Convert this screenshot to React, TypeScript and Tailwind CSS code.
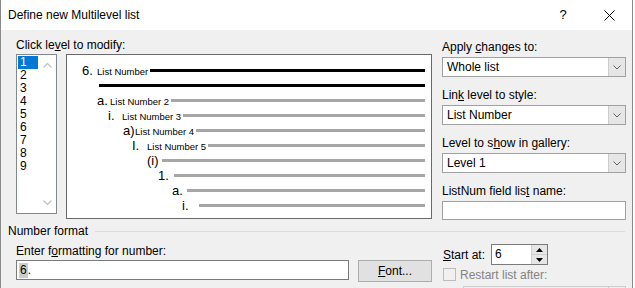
import React from "react";

const Chevron = ({ color = "#606060" }: { color?: string }) => (
  <svg width="8" height="5" viewBox="0 0 8 5">
    <path d="M0.5 0.5 L4 4 L7.5 0.5" fill="none" stroke={color} strokeWidth="1" />
  </svg>
);

const ChevronUp = ({ color = "#c0c0c0" }: { color?: string }) => (
  <svg width="9" height="5" viewBox="0 0 9 5">
    <path d="M0.5 4.5 L4.5 0.5 L8.5 4.5" fill="none" stroke={color} strokeWidth="1.2" />
  </svg>
);

function Combo({ value }: { value: string }) {
  return (
    <div className="flex h-[20px] border border-[#a0a0a0] bg-white">
      <div className="flex-1 pl-[4px] leading-[18px]">{value}</div>
      <div className="w-[17px] bg-[#e6e6e6] border-l border-[#cccccc] flex items-center justify-center">
        <Chevron />
      </div>
    </div>
  );
}

type Row = { pl: number; num?: string; nw?: number; text?: string; black?: boolean };

const rows: Row[] = [
  { pl: 15, num: "6.", nw: 15, text: "List Number", black: true },
  { pl: 30, black: true },
  { pl: 30, num: "a.", nw: 13, text: "List Number 2" },
  { pl: 41, num: "i.", nw: 14, text: "List Number 3" },
  { pl: 56, num: "a)", nw: 12, text: "List Number 4" },
  { pl: 65, num: "I.", nw: 15, text: "List Number 5" },
  { pl: 80, num: "(i)", nw: 13 },
  { pl: 91, num: "1.", nw: 14 },
  { pl: 105, num: "a.", nw: 13 },
  { pl: 115, num: "i.", nw: 15 },
];

export default function App() {
  return (
    <div className="w-[635px] h-[288px] overflow-hidden bg-white font-['Liberation_Sans',Arial,sans-serif] text-[12px] text-black">
      <div className="w-[633px] h-[288px] border-x border-[#8a8a8a] flex flex-col">
        {/* Title bar */}
        <div className="h-[30px] bg-white flex items-center shrink-0">
          <div className="pl-[7px]">Define new Multilevel list</div>
          <div className="ml-auto flex">
            <div className="w-[46px] h-[30px] flex items-center justify-center text-[13px]">?</div>
            <div className="w-[46px] h-[30px] flex items-center justify-center">
              <svg width="11" height="11" viewBox="0 0 11 11">
                <path d="M0.5 0.5 L10.5 10.5 M10.5 0.5 L0.5 10.5" stroke="#000" strokeWidth="1" />
              </svg>
            </div>
          </div>
        </div>

        {/* Body */}
        <div className="flex-1 bg-[#f0f0f0] flex flex-col">
          <div className="flex pl-[15px]">
            {/* Left part */}
            <div className="w-[416px] pt-[7px]">
              <div className="h-[16px] leading-[16px]">
                Click le<span className="underline">v</span>el to modify:
              </div>
              <div className="flex mt-[1px] items-start">
                <div className="w-[41px] h-[160px] border border-[#828790] bg-white flex">
                  <div className="w-[22px] pt-[1px] pl-[1px]">
                    {["1", "2", "3", "4", "5", "6", "7", "8", "9"].map((n, i) => (
                      <div
                        key={n}
                        className={`w-[20px] h-[13px] leading-[13px] pl-[2px] ${i === 0 ? "bg-[#0078d7] text-white" : ""}`}
                      >
                        {n}
                      </div>
                    ))}
                  </div>
                  <div className="flex-1 flex flex-col items-center justify-between py-[8px]">
                    <ChevronUp />
                    <div className="rotate-180 flex">
                      <ChevronUp />
                    </div>
                  </div>
                </div>
                <div className="ml-[9px] w-[366px] h-[165px] border border-[#6a6a6a] bg-white pt-[8px] pr-[6px]">
                  {rows.map((r, i) => (
                    <div key={i} className="h-[15px] flex items-center" style={{ paddingLeft: r.pl }}>
                      {r.num && (
                        <span className="text-[13px] leading-[15px] shrink-0" style={{ width: r.nw }}>
                          {r.num}
                        </span>
                      )}
                      {r.text && (
                        <span className="text-[9.5px] leading-[15px] shrink-0 pt-[1px]">{r.text}</span>
                      )}
                      <div className={`flex-1 h-[3px] ml-[2px] ${r.black ? "bg-black" : "bg-[#a6a6a6]"}`} />
                    </div>
                  ))}
                </div>
              </div>
            </div>

            {/* Right column */}
            <div className="ml-[10px] w-[184px] pt-[9px] flex flex-col">
              <div className="h-[16px] leading-[16px]">
                Apply <span className="underline">c</span>hanges to:
              </div>
              <div className="mt-[2px]">
                <Combo value="Whole list" />
              </div>
              <div className="h-[16px] leading-[16px] mt-[10px]">
                Lin<span className="underline">k</span> level to style:
              </div>
              <div className="mt-[2px]">
                <Combo value="List Number" />
              </div>
              <div className="h-[16px] leading-[16px] mt-[10px]">
                Level to s<span className="underline">h</span>ow in gallery:
              </div>
              <div className="mt-[2px]">
                <Combo value="Level 1" />
              </div>
              <div className="h-[16px] leading-[16px] mt-[10px]">
                ListNum field lis<span className="underline">t</span> name:
              </div>
              <div className="mt-[2px] h-[19px] border border-[#a0a0a0] bg-white" />
            </div>
          </div>

          {/* Number format */}
          <div className="flex items-center h-[16px] mt-[3px] pl-[7px] pr-[7px]">
            <span className="leading-[16px]">Number format</span>
            <div className="flex-1 h-px bg-[#dcdcdc] ml-[7px]" />
          </div>

          <div className="flex pl-[15px]">
            <div className="w-[416px] mt-[4px]">
              <div className="h-[16px] leading-[16px]">
                Enter f<span className="underline">o</span>rmatting for number:
              </div>
              <div className="flex mt-[1px] items-start">
                <div className="w-[333px] h-[20px] border border-[#7a7a7a] bg-white flex items-center pl-[2px]">
                  <span className="bg-[#cccccc] px-[1px] leading-[15px]">6</span>
                  <span>.</span>
                </div>
                <div className="ml-[9px] w-[74px] h-[22px] border border-[#adadad] bg-[#e1e1e1] flex items-center justify-center">
                  <span>
                    <span className="underline">F</span>ont...
                  </span>
                </div>
              </div>
            </div>

            <div className="ml-[11px] mt-[5px] flex flex-col">
              <div className="flex items-center h-[21px]">
                <span className="w-[48px]">
                  <span className="underline">S</span>tart at:
                </span>
                <div className="w-[57px] h-[21px] border border-[#7a7a7a] bg-white flex">
                  <div className="flex-1 pl-[3px] leading-[19px]">6</div>
                  <div className="w-[16px] flex flex-col border-l border-[#cfcfcf]">
                    <div className="flex-1 bg-[#e6e6e6] border-b border-[#cfcfcf] flex items-center justify-center">
                      <svg width="7" height="4" viewBox="0 0 7 4">
                        <path d="M0 4 L3.5 0 L7 4 Z" fill="#000" />
                      </svg>
                    </div>
                    <div className="flex-1 bg-[#e6e6e6] flex items-center justify-center">
                      <svg width="7" height="4" viewBox="0 0 7 4">
                        <path d="M0 0 L3.5 4 L7 0 Z" fill="#000" />
                      </svg>
                    </div>
                  </div>
                </div>
              </div>
              <div className="flex items-center mt-[3px] h-[13px]">
                <div className="w-[13px] h-[13px] border border-[#bcbcbc] bg-[#f0f0f0]" />
                <span className="ml-[4px] text-[#838383] leading-[16px]">Restart list after:</span>
              </div>
              <div className="ml-[20px] mt-[5px] w-[163px] h-[20px] border border-[#cccccc] bg-[#f0f0f0] flex">
                <div className="flex-1" />
                <div className="w-[17px] border-l border-[#cccccc]" />
              </div>
            </div>
          </div>
        </div>
      </div>
    </div>
  );
}
